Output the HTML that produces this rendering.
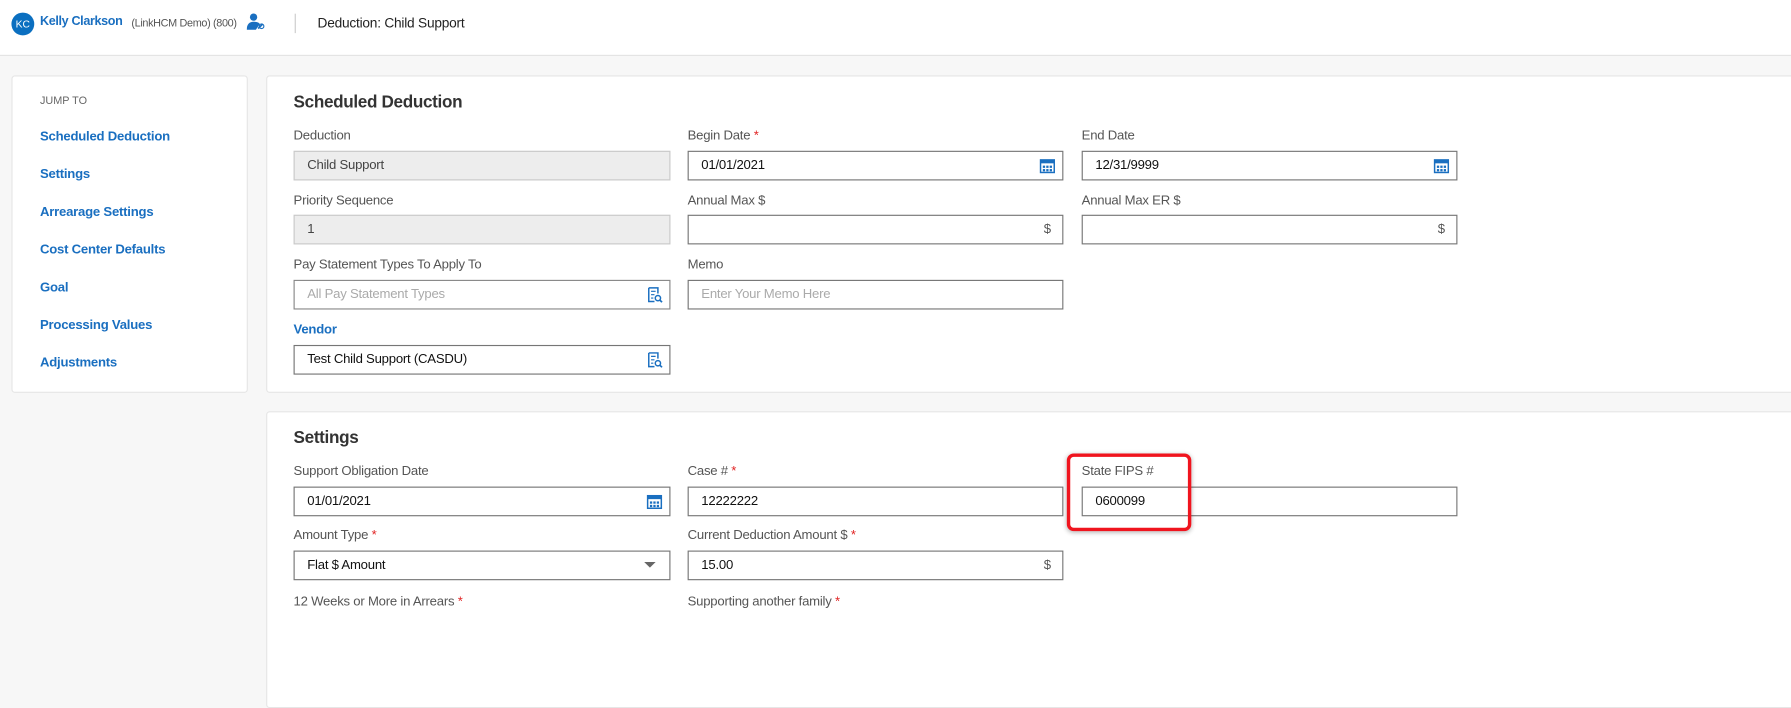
<!DOCTYPE html>
<html><head><meta charset="utf-8"><style>
*{box-sizing:border-box;margin:0;padding:0}
html,body{width:1791px;height:602px;overflow:hidden;background:#f7f7f7}
body{font-family:"Liberation Sans",sans-serif;color:#222}
#w{position:absolute;left:0;top:0;width:1568px;height:527px;transform:scale(1.1422);transform-origin:0 0}
.abs{position:absolute;white-space:nowrap}
.hdr{position:absolute;left:0;top:0;width:1568px;height:49px;background:#fff;border-bottom:1px solid #e4e4e4}
.card{position:absolute;background:#fff;border:1px solid #e6e6e6;border-radius:3px}
.lnk{position:absolute;left:35px;color:#1a6fc0;font-weight:bold;font-size:11.5px;letter-spacing:-0.2px}
.lbl{position:absolute;font-size:11.5px;color:#555;letter-spacing:-0.2px;white-space:nowrap}
.req{color:#e02020}
.in{position:absolute;height:26px;border:1px solid #767676;background:#fff;font-size:11.5px;padding-left:11px;line-height:24px;letter-spacing:-0.2px;color:#111}
.dis{background:#ededed;border-color:#c9c9c9;color:#444}
.ph{color:#aaa}
.ic{position:absolute;right:6px;top:5px}
.dol{position:absolute;right:10px;top:0;color:#555}
.ttl{position:absolute;font-size:15px;font-weight:bold;color:#333;letter-spacing:-0.3px}
</style></head><body><div id="w">
<div class="hdr">
  <div class="abs" style="left:10px;top:11px;width:20px;height:20px;border-radius:50%;background:#0b6fc0;color:#fff;font-size:9px;line-height:20px;text-align:center">KC</div>
  <div class="abs" style="left:35px;top:13px;font-size:11px;font-weight:bold;color:#1a6fc0;letter-spacing:-0.3px">Kelly Clarkson</div>
  <div class="abs" style="left:115px;top:15px;font-size:9.5px;color:#555;letter-spacing:-0.3px">(LinkHCM Demo) (800)</div>
  <svg class="abs" style="left:216px;top:11px" width="16" height="16" viewBox="0 0 16 16"><circle cx="6" cy="4" r="3.2" fill="#1a6fc0"/><path d="M0 15c0-5 2.5-7 6-7s5 1 5.5 2L8 15z" fill="#1a6fc0"/><path d="M10 14l4-4" stroke="#1a6fc0" stroke-width="1.5"/><circle cx="13" cy="12" r="2" fill="none" stroke="#1a6fc0" stroke-width="1"/></svg>
  <div class="abs" style="left:258px;top:12px;width:1px;height:17px;background:#ccc"></div>
  <div class="abs" style="left:278px;top:13px;font-size:12px;color:#222;letter-spacing:-0.2px">Deduction: Child Support</div>
</div>

<div class="card" style="left:10px;top:66px;width:207px;height:278px"></div>
<div class="abs" style="left:35px;top:83px;font-size:9.5px;color:#666">JUMP TO</div>
<div class="lnk" style="top:114px">Scheduled Deduction</div>
<div class="lnk" style="top:147px">Settings</div>
<div class="lnk" style="top:180px">Arrearage Settings</div>
<div class="lnk" style="top:213px">Cost Center Defaults</div>
<div class="lnk" style="top:246px">Goal</div>
<div class="lnk" style="top:279px">Processing Values</div>
<div class="lnk" style="top:312px">Adjustments</div>

<div class="card" style="left:233px;top:66px;width:1400px;height:278px"></div>
<div class="ttl" style="left:257px;top:81px">Scheduled Deduction</div>
<div class="lbl" style="left:257px;top:113px">Deduction</div>
<div class="in dis" style="left:257px;top:132px;width:330px">Child Support</div>
<div class="lbl" style="left:602px;top:113px">Begin Date <span class="req">*</span></div>
<div class="in" style="left:602px;top:132px;width:329px">01/01/2021<svg class="ic" width="14" height="14" viewBox="0 0 14 14"><rect x="1" y="2" width="12" height="11" fill="none" stroke="#1a6fc0" stroke-width="1.3"/><rect x="1" y="2" width="12" height="3" fill="#1a6fc0"/><g fill="#1a6fc0"><rect x="3" y="7" width="2" height="2"/><rect x="6" y="7" width="2" height="2"/><rect x="9" y="7" width="2" height="2"/><rect x="3" y="10" width="2" height="2"/><rect x="6" y="10" width="2" height="2"/><rect x="9" y="10" width="2" height="2"/></g></svg></div>
<div class="lbl" style="left:947px;top:113px">End Date</div>
<div class="in" style="left:947px;top:132px;width:329px">12/31/9999<svg class="ic" width="14" height="14" viewBox="0 0 14 14"><rect x="1" y="2" width="12" height="11" fill="none" stroke="#1a6fc0" stroke-width="1.3"/><rect x="1" y="2" width="12" height="3" fill="#1a6fc0"/><g fill="#1a6fc0"><rect x="3" y="7" width="2" height="2"/><rect x="6" y="7" width="2" height="2"/><rect x="9" y="7" width="2" height="2"/><rect x="3" y="10" width="2" height="2"/><rect x="6" y="10" width="2" height="2"/><rect x="9" y="10" width="2" height="2"/></g></svg></div>

<div class="lbl" style="left:257px;top:170px">Priority Sequence</div>
<div class="in dis" style="left:257px;top:188px;width:330px">1</div>
<div class="lbl" style="left:602px;top:170px">Annual Max $</div>
<div class="in" style="left:602px;top:188px;width:329px"><span class="dol">$</span></div>
<div class="lbl" style="left:947px;top:170px">Annual Max ER $</div>
<div class="in" style="left:947px;top:188px;width:329px"><span class="dol">$</span></div>

<div class="lbl" style="left:257px;top:226px">Pay Statement Types To Apply To</div>
<div class="in ph" style="left:257px;top:245px;width:330px;border-color:#888">All Pay Statement Types<svg class="ic" width="14" height="14" viewBox="0 0 14 14"><path d="M2 1h8v5M2 1v12h5" fill="none" stroke="#1a6fc0" stroke-width="1.3"/><path d="M4 4h4M4 7h3M4 10h2" stroke="#1a6fc0"/><circle cx="10" cy="10" r="2.3" fill="none" stroke="#1a6fc0" stroke-width="1.3"/><path d="M11.6 11.6l2 2" stroke="#1a6fc0" stroke-width="1.5"/></svg></div>
<div class="lbl" style="left:602px;top:226px">Memo</div>
<div class="in ph" style="left:602px;top:245px;width:329px">Enter Your Memo Here</div>

<div class="lbl" style="left:257px;top:283px;color:#1a6fc0;font-weight:bold">Vendor</div>
<div class="in" style="left:257px;top:302px;width:330px">Test Child Support (CASDU)<svg class="ic" width="14" height="14" viewBox="0 0 14 14"><path d="M2 1h8v5M2 1v12h5" fill="none" stroke="#1a6fc0" stroke-width="1.3"/><path d="M4 4h4M4 7h3M4 10h2" stroke="#1a6fc0"/><circle cx="10" cy="10" r="2.3" fill="none" stroke="#1a6fc0" stroke-width="1.3"/><path d="M11.6 11.6l2 2" stroke="#1a6fc0" stroke-width="1.5"/></svg></div>

<div class="card" style="left:233px;top:360px;width:1400px;height:260px"></div>
<div class="ttl" style="left:257px;top:375px">Settings</div>
<div class="lbl" style="left:257px;top:407px">Support Obligation Date</div>
<div class="in" style="left:257px;top:426px;width:330px">01/01/2021<svg class="ic" width="14" height="14" viewBox="0 0 14 14"><rect x="1" y="2" width="12" height="11" fill="none" stroke="#1a6fc0" stroke-width="1.3"/><rect x="1" y="2" width="12" height="3" fill="#1a6fc0"/><g fill="#1a6fc0"><rect x="3" y="7" width="2" height="2"/><rect x="6" y="7" width="2" height="2"/><rect x="9" y="7" width="2" height="2"/><rect x="3" y="10" width="2" height="2"/><rect x="6" y="10" width="2" height="2"/><rect x="9" y="10" width="2" height="2"/></g></svg></div>
<div class="lbl" style="left:602px;top:407px">Case # <span class="req">*</span></div>
<div class="in" style="left:602px;top:426px;width:329px">12222222</div>
<div class="lbl" style="left:947px;top:407px">State FIPS #</div>
<div class="in" style="left:947px;top:426px;width:329px">0600099</div>
<div class="abs" style="left:934px;top:397px;width:109px;height:68px;border:3px solid #f0141e;border-radius:6px;box-shadow:0 1px 4px rgba(0,0,0,0.3)"></div>

<div class="lbl" style="left:257px;top:463px">Amount Type <span class="req">*</span></div>
<div class="in" style="left:257px;top:482px;width:330px">Flat $ Amount<span style="position:absolute;right:12px;top:9px;width:0;height:0;border-left:5px solid transparent;border-right:5px solid transparent;border-top:5px solid #666"></span></div>
<div class="lbl" style="left:602px;top:463px">Current Deduction Amount $ <span class="req">*</span></div>
<div class="in" style="left:602px;top:482px;width:329px">15.00<span class="dol">$</span></div>

<div class="lbl" style="left:257px;top:521px">12 Weeks or More in Arrears <span class="req">*</span></div>
<div class="lbl" style="left:602px;top:521px">Supporting another family <span class="req">*</span></div>
</div></body></html>
